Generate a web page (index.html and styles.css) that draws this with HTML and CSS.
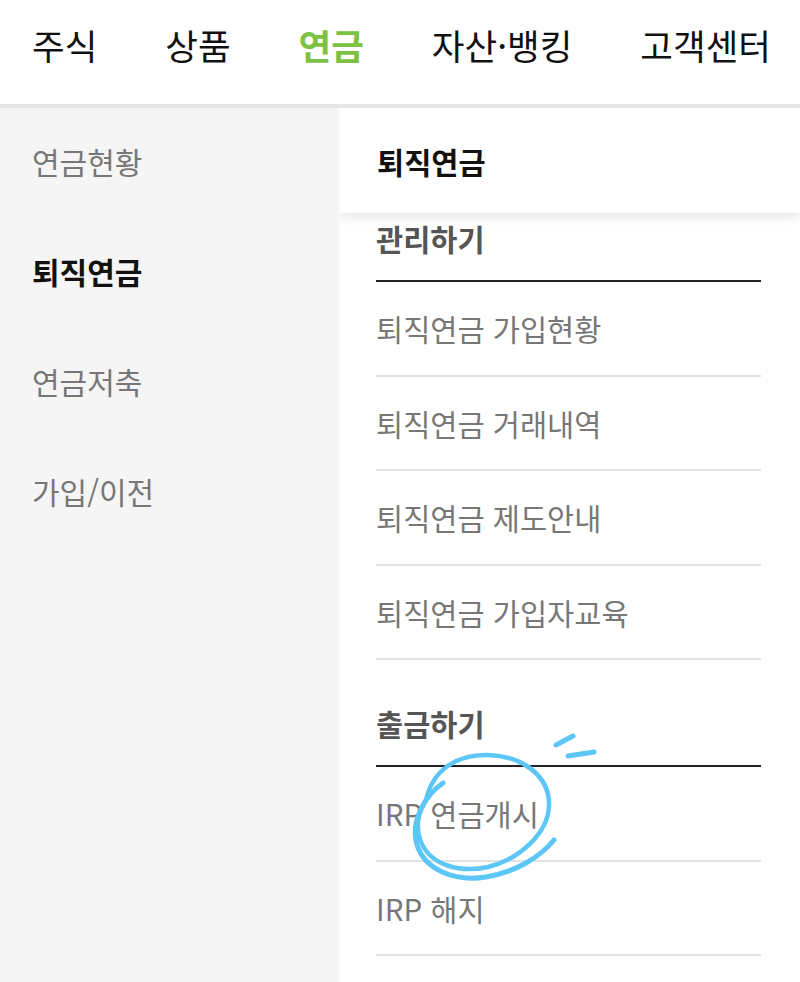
FILE: index.html
```html
<!DOCTYPE html>
<html lang="ko">
<head>
<meta charset="utf-8">
<title>연금 메뉴</title>
<link rel="stylesheet" href="styles.css">
</head>
<body>
<div class="page">
  <header class="topnav">
    <span class="topnav-item">주식</span>
    <span class="topnav-item">상품</span>
    <span class="topnav-item is-active">연금</span>
    <span class="topnav-item">자산·뱅킹</span>
    <span class="topnav-item">고객센터</span>
  </header>
  <div class="body">
    <nav class="sidebar">
      <div class="side-item">연금현황</div>
      <div class="side-item is-active">퇴직연금</div>
      <div class="side-item">연금저축</div>
      <div class="side-item">가입/이전</div>
    </nav>
    <section class="panel">
      <div class="panel-title">퇴직연금</div>
      <div class="menu">
        <div class="menu-head">관리하기</div>
        <div class="menu-item">퇴직연금 가입현황</div>
        <div class="menu-item">퇴직연금 거래내역</div>
        <div class="menu-item">퇴직연금 제도안내</div>
        <div class="menu-item">퇴직연금 가입자교육</div>
        <div class="menu-head">출금하기</div>
        <div class="menu-item">IRP 연금개시</div>
        <div class="menu-item">IRP 해지</div>
      </div>
    </section>
  </div>
  <svg class="annotation" width="800" height="982" viewBox="0 0 800 982" aria-hidden="true">
    <g fill="none" stroke="#5cc6f7" stroke-linecap="round" stroke-linejoin="round">
      <path stroke-width="5" d="M443 783 C 425 795, 410 822, 417 845 C 425 870, 455 882, 486 877 C 516 872, 540 857, 554 840"/>
      <path stroke-width="4.5" d="M426 800 C 433 769, 458 754, 488 755 C 523 756, 550 776, 549 806 C 548 833, 520 859, 488 867 C 461 873, 431 866, 421 842 C 415 828, 418 812, 426 800"/>
      <path stroke-width="5" d="M556 745 L 573 736"/>
      <path stroke-width="5" d="M568 756 L 594 752"/>
    </g>
  </svg>
</div>
</body>
</html>
```
FILE: styles.css
```css
* { box-sizing: border-box; }
html, body { margin: 0; padding: 0; background: #fff; }
body {
  font-family: "Noto Sans CJK KR", "Noto Sans", sans-serif;
  width: 800px;
  height: 982px;
  overflow: hidden;
}
.page {
  position: relative;
  width: 800px;
  height: 982px;
  display: flex;
  flex-direction: column;
}
.topnav {
  height: 108px;
  flex: none;
  display: flex;
  align-items: center;
  justify-content: space-between;
  padding: 0 29px 14px 32px;
  border-bottom: 4px solid #e6e6e6;
  background: #fff;
}
.topnav-item {
  font-size: 35.5px;
  line-height: 44px;
  color: #111;
  font-weight: 400;
}
.topnav-item.is-active {
  color: #7dc243;
  font-weight: 700;
}
.body {
  flex: 1;
  display: flex;
  min-height: 0;
}
.sidebar {
  width: 339px;
  flex: none;
  background: #f5f5f5;
}
.side-item {
  padding: 33px 32px 37px;
  line-height: 40px;
  font-size: 30px;
  color: #777;
}
.side-item.is-active {
  color: #111;
  font-weight: 700;
}
.panel {
  flex: 1;
  position: relative;
  background: #fff;
  overflow: hidden;
}
.panel-title {
  position: absolute;
  top: 0;
  left: 0;
  right: 0;
  height: 105px;
  padding: 33px 38px 0;
  line-height: 40px;
  font-size: 29.5px;
  font-weight: 700;
  color: #111;
  background: #fff;
  box-shadow: 0 5px 10px rgba(0, 0, 0, 0.09);
  z-index: 2;
}
.menu {
  padding: 67px 39px 0 37px;
}
.menu-head {
  padding: 43px 0 22px;
  line-height: 40px;
  font-size: 29.5px;
  font-weight: 700;
  color: #555;
  border-bottom: 2px solid #222;
}
.menu-item {
  padding: 26px 0 26.5px;
  line-height: 40px;
  font-size: 29.5px;
  color: #777;
  border-bottom: 2px solid #e3e3e3;
}
.annotation {
  position: absolute;
  left: 0;
  top: 0;
  pointer-events: none;
  z-index: 5;
}
```
